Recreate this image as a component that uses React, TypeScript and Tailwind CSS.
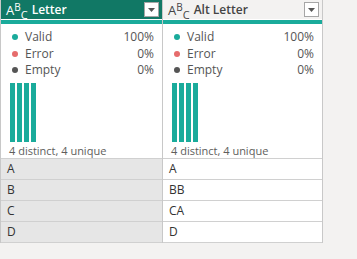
import React from 'react';

type ColumnProps = {
  name: string;
  active?: boolean;
  values: string[];
  width: string;
};

function AbcIcon({ light }: { light: boolean }) {
  return (
    <span className={`inline-flex h-[18px] leading-none ${light ? 'text-white' : 'text-[#444]'}`}>
      <span className="self-end mb-[2px] text-[13px]">A</span>
      <span className="self-start mt-[1px] text-[10px]">B</span>
      <span className="self-end mb-[-1px] text-[11px]">C</span>
    </span>
  );
}

function Dropdown() {
  return (
    <div className="w-[15px] h-[15px] bg-white border border-[#a6a6a6] flex items-center justify-center">
      <svg width="7" height="4" viewBox="0 0 7 4">
        <path d="M0 0 L7 0 L3.5 4 Z" fill="#555" />
      </svg>
    </div>
  );
}

function Column({ name, active = false, values, width }: ColumnProps) {
  const stats = [
    { label: 'Valid', value: '100%', dot: 'bg-[#1aab9b]' },
    { label: 'Error', value: '0%', dot: 'bg-[#e66c6c]' },
    { label: 'Empty', value: '0%', dot: 'bg-[#555555]' },
  ];

  return (
    <div className={`flex flex-col ${width} border-r border-[#c8c8c8] ${active ? 'border-l' : ''}`}>
      {/* Header */}
      <div className={`h-[19px] flex items-center pl-[5px] pr-[3px] ${active ? 'bg-[#117865]' : 'bg-[#f3f2f1]'}`}>
        <AbcIcon light={active} />
        <span className={`ml-[4px] flex-1 text-[12px] font-semibold ${active ? 'text-white' : 'text-[#444]'}`}>{name}</span>
        <Dropdown />
      </div>
      <div className="h-px bg-white" />
      <div className="h-[4px] bg-[#1aab9b]" />

      {/* Quality + distribution */}
      <div className="h-[134px] bg-white flex flex-col pl-[8px] pr-[8px]">
        <div className="pt-[5px] flex flex-col">
          {stats.map((s) => (
            <div key={s.label} className="h-[16.5px] flex items-center text-[12px] text-[#555]">
              <span className={`w-[6px] h-[6px] rounded-full ${s.dot} ml-[3px]`} />
              <span className="ml-[7px] flex-1">{s.label}</span>
              <span>{s.value}</span>
            </div>
          ))}
        </div>
        <div className="mt-[4px] pl-px flex gap-[2.5px] h-[59px]">
          {[0, 1, 2, 3].map((i) => (
            <div key={i} className="w-[4.5px] h-full bg-[#1aab9b]" />
          ))}
        </div>
        <div className="mt-[2px] text-[11px] text-[#605e5c] leading-[14px]">4 distinct, 4 unique</div>
      </div>

      {/* Rows */}
      <div className="flex flex-col border-t border-[#d0d0d0]">
        {values.map((v, i) => (
          <div
            key={i}
            className={`h-[21px] flex items-center px-[6px] text-[12px] text-[#333] border-b border-[#d0d0d0] ${active ? 'bg-[#e6e6e6]' : 'bg-white'}`}
          >
            {v}
          </div>
        ))}
      </div>
    </div>
  );
}

export default function App() {
  return (
    <div className="w-[357px] h-[259px] bg-[#f3f2f1] font-['Segoe_UI','Open_Sans',sans-serif] overflow-hidden">
      <div className="flex">
        <Column name="Letter" active width="w-[163px]" values={['A', 'B', 'C', 'D']} />
        <Column name="Alt Letter" width="w-[160px]" values={['A', 'BB', 'CA', 'D']} />
      </div>
    </div>
  );
}
